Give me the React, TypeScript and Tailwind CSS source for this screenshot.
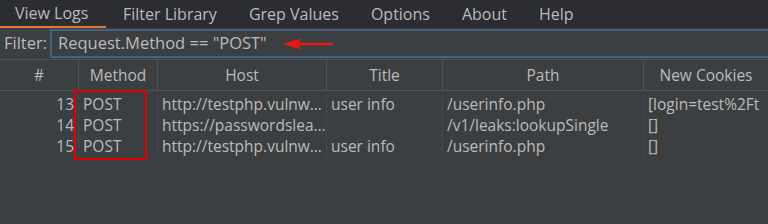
import type React from 'react'

const tabs = ['View Logs', 'Filter Library', 'Grep Values', 'Options', 'About', 'Help']

const rows = [
  {id: 13, method: 'POST', host: 'http://testphp.vulnw…', title: 'user info', path: '/userinfo.php', cookies: '[login=test%2Ft'},
  {id: 14, method: 'POST', host: 'https://passwordslea…', title: '', path: '/v1/leaks:lookupSingle', cookies: '[]'},
  {id: 15, method: 'POST', host: 'http://testphp.vulnw…', title: 'user info', path: '/userinfo.php', cookies: '[]'}
]

const cols = 'grid grid-cols-[78px_79px_169px_116px_201px_1fr]'

const App: React.FC = () => {
  return (
    <div className="w-[768px] h-[224px] overflow-hidden bg-[#3c3f41] text-[#bbbbbb] font-['Open_Sans',sans-serif]">
      {/* tabs */}
      <div className="flex h-[28px] bg-[#2b2d30] text-[16px]">
        {tabs.map((t, i) => (
          <div
            key={t}
            className={`h-full flex items-center whitespace-nowrap ${i === 0 ? 'w-[106px] pl-[15px] border-b-2 border-[#e0783a]' : i === 1 ? 'pl-[17px] pr-[16px]' : 'px-[16px]'}`}>
            {t}
          </div>
        ))}
      </div>

      {/* filter */}
      <div className="flex items-center h-[31px] pl-[4px] text-[16.5px]">
        <span className="mr-[3px]">Filter:</span>
        <div className="flex-1 h-[29px] flex items-center pl-[6px] border-2 border-r-0 border-[#466080] bg-[#3c3f41] whitespace-nowrap">
          <span>Request.Method == "POST"</span>
          <svg width="50" height="14" viewBox="0 0 50 14" className="ml-[16px]">
            <path d="M16 7 H49" stroke="#ec1414" strokeWidth="2.5" strokeLinecap="round" />
            <path d="M0 7 L18 1.5 L15 7 L18 12.5 Z" fill="#ec1414" />
          </svg>
        </div>
      </div>

      {/* table */}
      <div className="relative text-[15.5px]">
        <div className={`${cols} h-[32px] border-t border-b border-[#515456] items-center`}>
          {['#', 'Method', 'Host', 'Title', 'Path', 'New Cookies'].map((h, i) => (
            <div key={h} className={`h-full flex items-center justify-center pt-[2px] ${i > 0 ? 'border-l border-[#515456]' : ''} whitespace-nowrap`}>
              {h}
            </div>
          ))}
        </div>
        <div className="pt-[3px]">
          {rows.map((r) => (
            <div key={r.id} className={`${cols} h-[21px] items-center whitespace-nowrap leading-[21px]`}>
              <div className="text-right pr-[4px]">{r.id}</div>
              <div className="pl-[4px] border-l border-[#45484a] h-full">{r.method}</div>
              <div className="pl-[4px] border-l border-[#45484a] h-full overflow-hidden">{r.host}</div>
              <div className="pl-[4px] border-l border-[#45484a] h-full overflow-hidden">{r.title}</div>
              <div className="pl-[4px] border-l border-[#45484a] h-full overflow-hidden">{r.path}</div>
              <div className="pl-[4px] border-l border-[#45484a] h-full overflow-hidden">{r.cookies}</div>
            </div>
          ))}
        </div>
        {/* red highlight */}
        <div className="absolute left-[74px] top-[31px] w-[73px] h-[70px] border-2 border-[#e60000]" />
      </div>
    </div>
  )
}

export default App
